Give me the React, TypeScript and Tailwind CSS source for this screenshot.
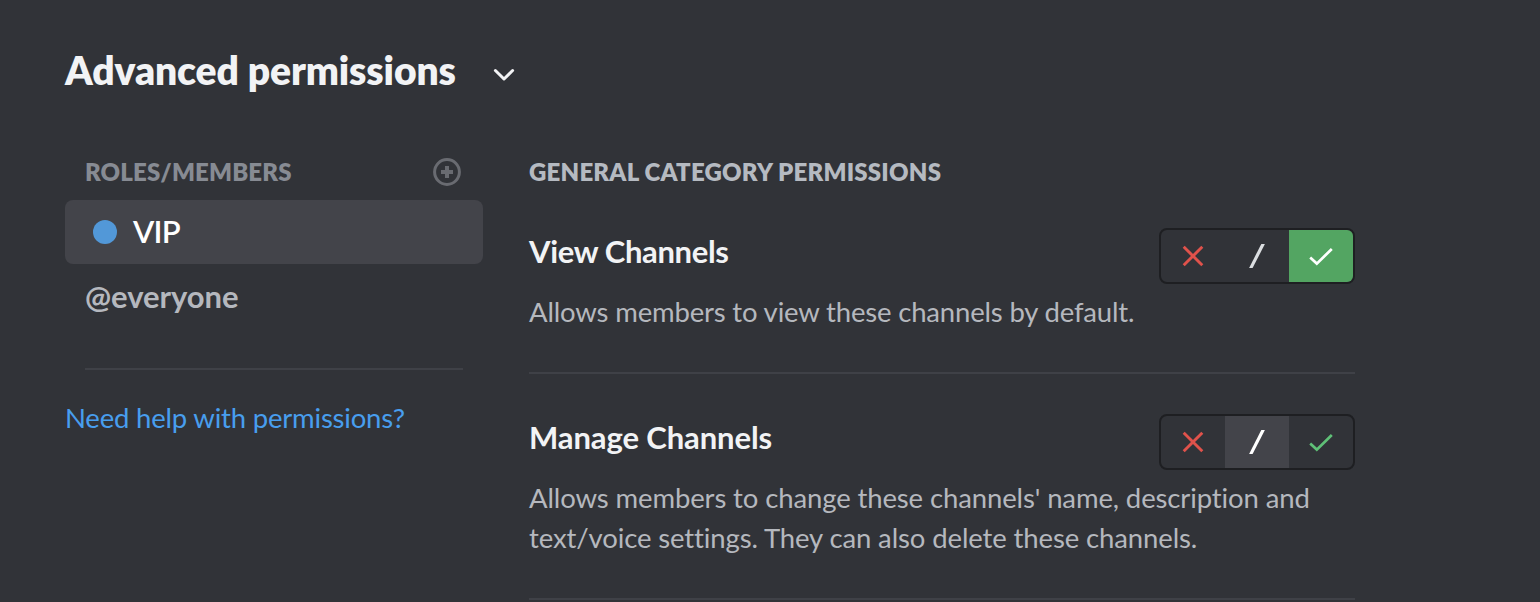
type State = "deny" | "inherit" | "allow";

function DenyIcon() {
  return (
    <svg width="22" height="22" viewBox="0 0 22 22" fill="none" stroke="#e0524b" strokeWidth="2.9">
      <path d="M1.7 1.7 20.3 20.3M20.3 1.7 1.7 20.3" />
    </svg>
  );
}

function SlashIcon({ color }: { color: string }) {
  return (
    <svg width="16" height="24" viewBox="0 0 16 24" fill={color}>
      <path d="M12.3 0H15.9L3.6 24H0.1Z" />
    </svg>
  );
}

function CheckIcon({ color }: { color: string }) {
  return (
    <svg className="mt-px" width="24" height="18" viewBox="0 0 24 18" fill="none" stroke={color} strokeWidth="2.7">
      <path d="M1.2 9.6 7.8 15.6 22.8 1" />
    </svg>
  );
}

function Toggle({ value }: { value: State }) {
  return (
    <div className="flex h-14 w-[196px] shrink-0 overflow-hidden rounded-lg border-2 border-[#1e1f22]">
      <button className="flex flex-1 items-center justify-center">
        <DenyIcon />
      </button>
      <button className={`flex flex-1 items-center justify-center ${value === "inherit" ? "bg-[#43444a]" : ""}`}>
        <SlashIcon color={value === "inherit" ? "#ffffff" : "#dbdee1"} />
      </button>
      <button className={`flex flex-1 items-center justify-center ${value === "allow" ? "bg-[#53a562]" : ""}`}>
        <CheckIcon color={value === "allow" ? "#ffffff" : "#5fc077"} />
      </button>
    </div>
  );
}

export default function App() {
  return (
    <div className="h-[602px] w-full overflow-hidden bg-[#313338] pt-[45px] pl-[65px] font-['Lato','Open_Sans',sans-serif]">
      <header className="flex h-12 items-center">
        <h1 className="w-[391px] pt-0.5 text-[39px] leading-[48px] font-extrabold tracking-[-0.11px] whitespace-nowrap text-[#f2f3f5]">
          Advanced permissions
        </h1>
        <svg className="mt-3 ml-[37px]" width="22" height="14" viewBox="0 0 22 14" fill="none" stroke="#f2f3f5" strokeWidth="3" strokeLinecap="round" strokeLinejoin="round">
          <path d="M2.4 2.5 11 11 19.6 2.5" />
        </svg>
      </header>

      <div className="mt-[65px] flex gap-[46px]">
        <aside className="w-[418px]">
          <div className="flex h-[42px] items-start justify-between pr-[22px] pl-5">
            <h2 className="mt-0.5 text-[24px] leading-6 font-extrabold tracking-[0.13px] text-[#878b93]">ROLES/MEMBERS</h2>
            <svg width="28" height="28" viewBox="0 0 28 28" fill="none" stroke="#696b71">
              <circle cx="14" cy="14" r="12.4" strokeWidth="3" />
              <path d="M14 8V20M8 14H20" strokeWidth="4" />
            </svg>
          </div>
          <div className="flex h-16 items-center rounded-lg bg-[#43444a] pl-7">
            <span className="size-6 rounded-full bg-[#5298d8]" />
            <span className="ml-4 pb-0.5 text-[31px] leading-10 font-semibold tracking-[-0.7px] text-white">VIP</span>
          </div>
          <div className="flex h-16 items-center pl-5 text-[31px] leading-10 font-bold tracking-[-0.05px] text-[#b5b8be]">
            @everyone
          </div>
          <div className="mx-5 mt-10 h-0.5 bg-[#3f4147]" />
          <a className="mt-7 block text-[27.5px] leading-10 tracking-[-0.2px] text-[#489eee]">Need help with permissions?</a>
        </aside>

        <main className="w-[826px]">
          <h2 className="mt-0.5 text-[24px] leading-6 font-extrabold tracking-[0.22px] text-[#b5bac1]">GENERAL CATEGORY PERMISSIONS</h2>
          <section className="mt-11 h-[146px] border-b-2 border-[#3f4147]">
            <div className="flex h-14 justify-between">
              <h3 className="mt-[3px] text-[31px] leading-10 font-bold tracking-[-0.35px] text-[#f2f3f5]">View Channels</h3>
              <Toggle value="allow" />
            </div>
            <p className="mt-2 text-[27.5px] leading-10 tracking-[-0.17px] text-[#b5b8be]">
              Allows members to view these channels by default.
            </p>
          </section>
          <section className="mt-10 h-[186px] border-b-2 border-[#3f4147]">
            <div className="flex h-14 justify-between">
              <h3 className="mt-[3px] text-[31px] leading-10 font-bold tracking-[-0.1px] text-[#f2f3f5]">Manage Channels</h3>
              <Toggle value="inherit" />
            </div>
            <p className="mt-2 text-[27.5px] leading-10 tracking-[-0.12px] text-[#b5b8be]">
              Allows members to change these channels' name, description and
              <br />
              text/voice settings. They can also delete these channels.
            </p>
          </section>
        </main>
      </div>
    </div>
  );
}
